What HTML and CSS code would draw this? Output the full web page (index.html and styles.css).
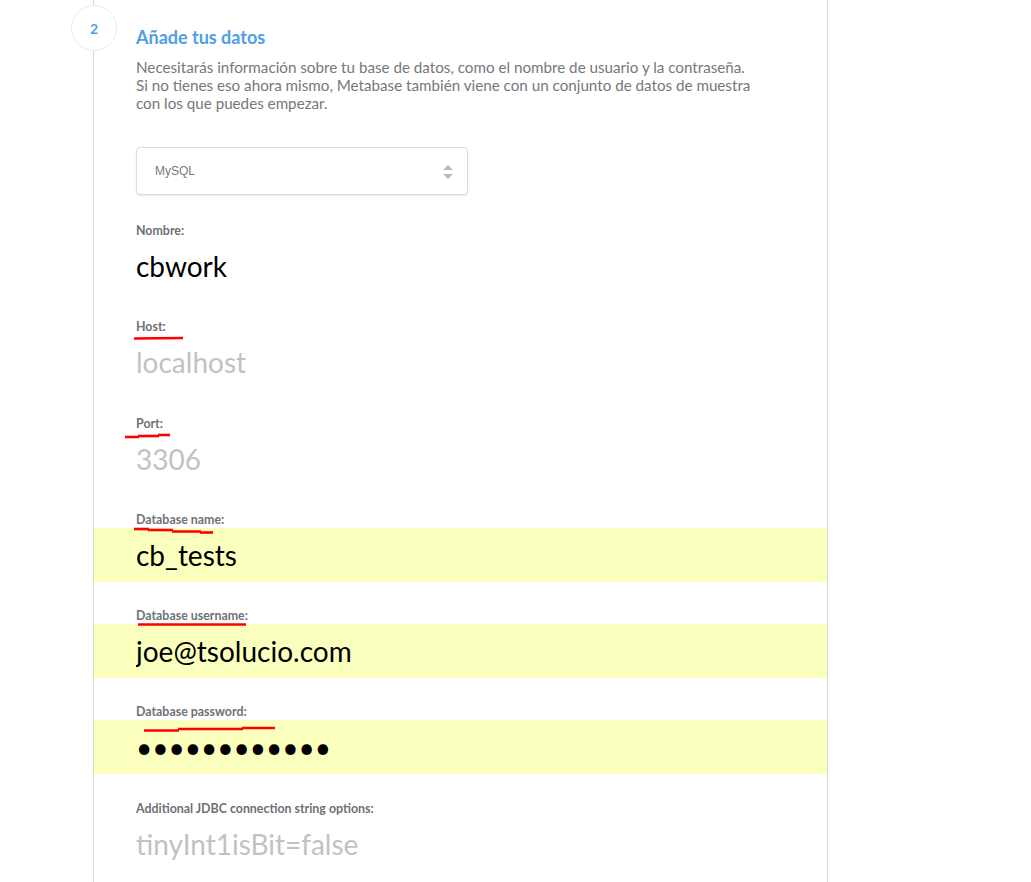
FILE: index.html
```html
<!DOCTYPE html>
<html>
<head>
  <title>Añade tus datos</title>
  <meta charset="UTF-8">
  <link rel="stylesheet" href="styles.css">
</head>
<body>
  <div class="page">
    <div class="step">
      <div class="step-number">2</div>

      <div class="step-head">
        <h2>Añade tus datos</h2>
        <p>Necesitarás información sobre tu base de datos, como el nombre de usuario y la contraseña.
        Si no tienes eso ahora mismo, Metabase también viene con un conjunto de datos de muestra
        con los que puedes empezar.</p>
      </div>

      <div class="engine">
        <div class="select-wrap">
          <select class="select">
            <option>MySQL</option>
          </select>
          <svg class="select-arrows" width="10" height="14" viewBox="0 0 10 14">
            <path d="M5 0 L10 5 L0 5 Z" fill="#bbb"/>
            <path d="M5 14 L10 9 L0 9 Z" fill="#bbb"/>
          </svg>
        </div>
      </div>

      <!-- campos de conexión -->
      <div class="field">
        <label>Nombre:</label>
        <input class="input" type="text" value="cbwork">
      </div>
      <div class="field">
        <label>Host:</label>
        <input class="input" type="text" placeholder="localhost">
      </div>
      <div class="field">
        <label>Port:</label>
        <input class="input" type="text" placeholder="3306">
      </div>
      <div class="field">
        <label>Database name:</label>
        <input class="input autofill" type="text" value="cb_tests">
      </div>
      <div class="field">
        <label>Database username:</label>
        <input class="input autofill" type="text" value="joe@tsolucio.com">
      </div>
      <div class="field">
        <label>Database password:</label>
        <input class="input autofill" type="password" value="abcdefghijkl">
      </div>
      <div class="field">
        <label>Additional JDBC connection string options:</label>
        <input class="input" type="text" placeholder="tinyInt1isBit=false">
      </div>
    </div>
  </div>

  <!-- marcas rojas dibujadas encima de la captura -->
  <svg class="marks" width="1031" height="882" viewBox="0 0 1031 882">
    <g stroke="#f00" stroke-width="2.6" fill="none">
      <line x1="134" y1="338.5" x2="183" y2="338"/>
      <line x1="125" y1="437" x2="139" y2="437"/>
      <line x1="138" y1="436" x2="159" y2="436"/>
      <line x1="158" y1="435" x2="170" y2="435"/>
      <line x1="134" y1="529" x2="149" y2="529"/>
      <line x1="148" y1="530" x2="173" y2="530"/>
      <line x1="172" y1="531.5" x2="201" y2="531.5"/>
      <line x1="200" y1="532.5" x2="213" y2="532.5"/>
      <line x1="138" y1="624.5" x2="246" y2="624.5"/>
      <line x1="144" y1="730.5" x2="179" y2="730.5"/>
      <line x1="178" y1="729" x2="243" y2="729"/>
      <line x1="242" y1="728" x2="275" y2="728"/>
    </g>
  </svg>
</body>
</html>
```

FILE: styles.css
```css
body {
  margin: 0;
  font-family: Lato, "Open Sans", sans-serif;
  background-color: white;
  color: #2e353b;
}
.page {
  padding-left: 93px;
}
.step {
  position: relative;
  width: 733px;
  min-height: 900px;
  border-left: 1px solid #d9d9d9;
  border-right: 1px solid #d9d9d9;
}
.step-number {
  position: absolute;
  left: -23px;
  top: 5px;
  width: 44px;
  height: 44px;
  border: 1px solid #e8ecee;
  border-radius: 50%;
  background-color: white;
  color: #509ee3;
  font-weight: bold;
  font-size: 14px;
  display: flex;
  align-items: center;
  justify-content: center;
}
.step-head {
  padding: 26px 0 0 42px;
}
.step-head h2 {
  margin: 0;
  font-size: 18px;
  line-height: 22px;
  color: #509ee3;
  font-weight: bold;
}
.step-head p {
  margin: 10px 0 0;
  width: 616px;
  font-size: 15.2px;
  line-height: 18px;
  color: #74787c;
}
.engine {
  padding: 35px 0 0 42px;
  margin-bottom: 28px;
}
.select-wrap {
  position: relative;
  width: 332px;
}
.select {
  appearance: none;
  -webkit-appearance: none;
  display: block;
  width: 100%;
  height: 48px;
  padding: 0 18px;
  border: 1px solid #dcdcdc;
  border-radius: 4px;
  background-color: white;
  box-shadow: 0 1px 2px rgba(0, 0, 0, 0.09);
  font-family: "Liberation Sans", Arial, sans-serif;
  font-size: 12px;
  color: #777;
}
.select-arrows {
  position: absolute;
  right: 15px;
  top: 18px;
}
.field {
  margin-bottom: 26.3px;
}
.field label {
  display: block;
  padding-left: 42px;
  font-size: 12.4px;
  line-height: 16px;
  font-weight: bold;
  color: #6e7175;
}
.input {
  display: block;
  box-sizing: border-box;
  width: 100%;
  height: 54px;
  padding: 0 0 0 42px;
  margin: 0;
  border: none;
  outline: none;
  background-color: transparent;
  font-family: Lato, "Open Sans", sans-serif;
  font-size: 28px;
  color: black;
}
.input::placeholder {
  color: #c2c2c2;
}
.input.autofill {
  background-color: #faffbd;
}
.marks {
  position: absolute;
  left: 0;
  top: 0;
  pointer-events: none;
}
```
